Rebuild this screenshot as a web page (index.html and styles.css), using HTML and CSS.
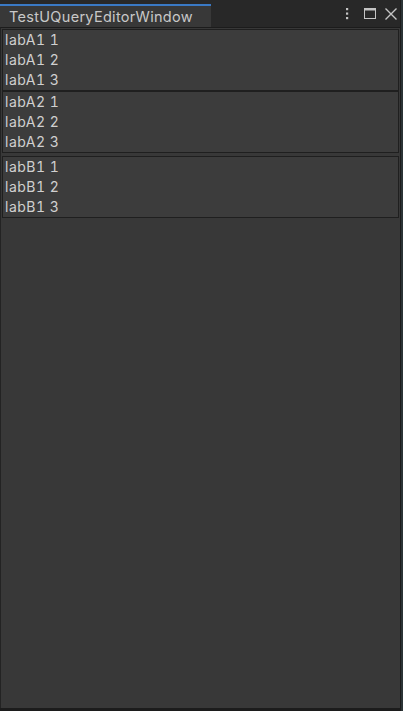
FILE: index.html
```html
<!DOCTYPE html>
<html>
<head>
<meta charset="utf-8">
<link rel="stylesheet" href="styles.css">
</head>
<body>
<div class="screen">
  <div class="window">
    <div class="tabbar">
      <div class="tab"><span class="tab-title">TestUQueryEditorWindow</span></div>
      <div class="tab-actions">
        <svg class="icon icon-menu" width="12" height="14" viewBox="0 0 12 14">
          <rect x="5" y="1" width="2.2" height="2.2" fill="#c4c4c4"/>
          <rect x="5" y="5.5" width="2.2" height="2.2" fill="#c4c4c4"/>
          <rect x="5" y="10" width="2.2" height="2.2" fill="#c4c4c4"/>
        </svg>
        <svg class="icon" width="14" height="14" viewBox="0 0 14 14">
          <rect x="1.5" y="1.5" width="11" height="10" fill="none" stroke="#c4c4c4" stroke-width="1"/>
          <rect x="1" y="1" width="12" height="2.5" fill="#c4c4c4"/>
        </svg>
        <svg class="icon" width="14" height="14" viewBox="0 0 14 14">
          <path d="M1.5 1.5 L12.5 12.5 M12.5 1.5 L1.5 12.5" stroke="#c4c4c4" stroke-width="1.4"/>
        </svg>
      </div>
    </div>
    <div class="panel">
      <div class="group">
        <div class="row">labA1 1</div>
        <div class="row">labA1 2</div>
        <div class="row">labA1 3</div>
      </div>
      <div class="group">
        <div class="row">labA2 1</div>
        <div class="row">labA2 2</div>
        <div class="row">labA2 3</div>
      </div>
      <div class="group group-gap">
        <div class="row">labB1 1</div>
        <div class="row">labB1 2</div>
        <div class="row">labB1 3</div>
      </div>
    </div>
  </div>
  <div class="outside"></div>
</div>
</body>
</html>
```
FILE: styles.css
```css
html, body {
  margin: 0;
  padding: 0;
  background: #232323;
}
.screen {
  display: flex;
  width: 403px;
  height: 711px;
  overflow: hidden;
}
.window {
  width: 400px;
  height: 708px;
  display: flex;
  flex-direction: column;
  border-right: 1px solid #1c1c1c;
  border-bottom: 3px solid #1c1c1c;
}
.outside {
  flex: 1;
  background: #2b3336;
}
.tabbar {
  height: 27px;
  background: #282828;
  display: flex;
  align-items: flex-end;
  justify-content: space-between;
}
.tab {
  width: 211px;
  height: 21px;
  background: #383838;
  border-top: 2px solid #3a79c4;
  display: flex;
  align-items: center;
}
.tab-title {
  font-family: Inter, "Noto Sans", sans-serif;
  font-size: 14.5px;
  color: #c8c8c8;
  padding-left: 9px;
  letter-spacing: 0.3px;
}
.tab-actions {
  align-self: stretch;
  display: flex;
  align-items: center;
  gap: 7px;
  padding-right: 2px;
  padding-top: 1px;
}
.icon {
  display: block;
}
.icon-menu {
  margin-right: 3px;
}
.panel {
  flex: 1;
  background: #383838;
  border-top: 1px solid #1c1c1c;
  border-left: 1px solid #232323;
  padding: 1px 1px 0 1px;
}
.group {
  background: #3c3c3c;
  border: 1px solid #1f1f1f;
  display: flex;
  flex-direction: column;
}
.group-gap {
  margin-top: 3px;
}
.row {
  height: 20px;
  line-height: 20px;
  padding-left: 2px;
  font-family: Inter, "Noto Sans", sans-serif;
  font-size: 14px;
  color: #d0d0d0;
  letter-spacing: 0.5px;
  font-feature-settings: "tnum" 1;
}
```
